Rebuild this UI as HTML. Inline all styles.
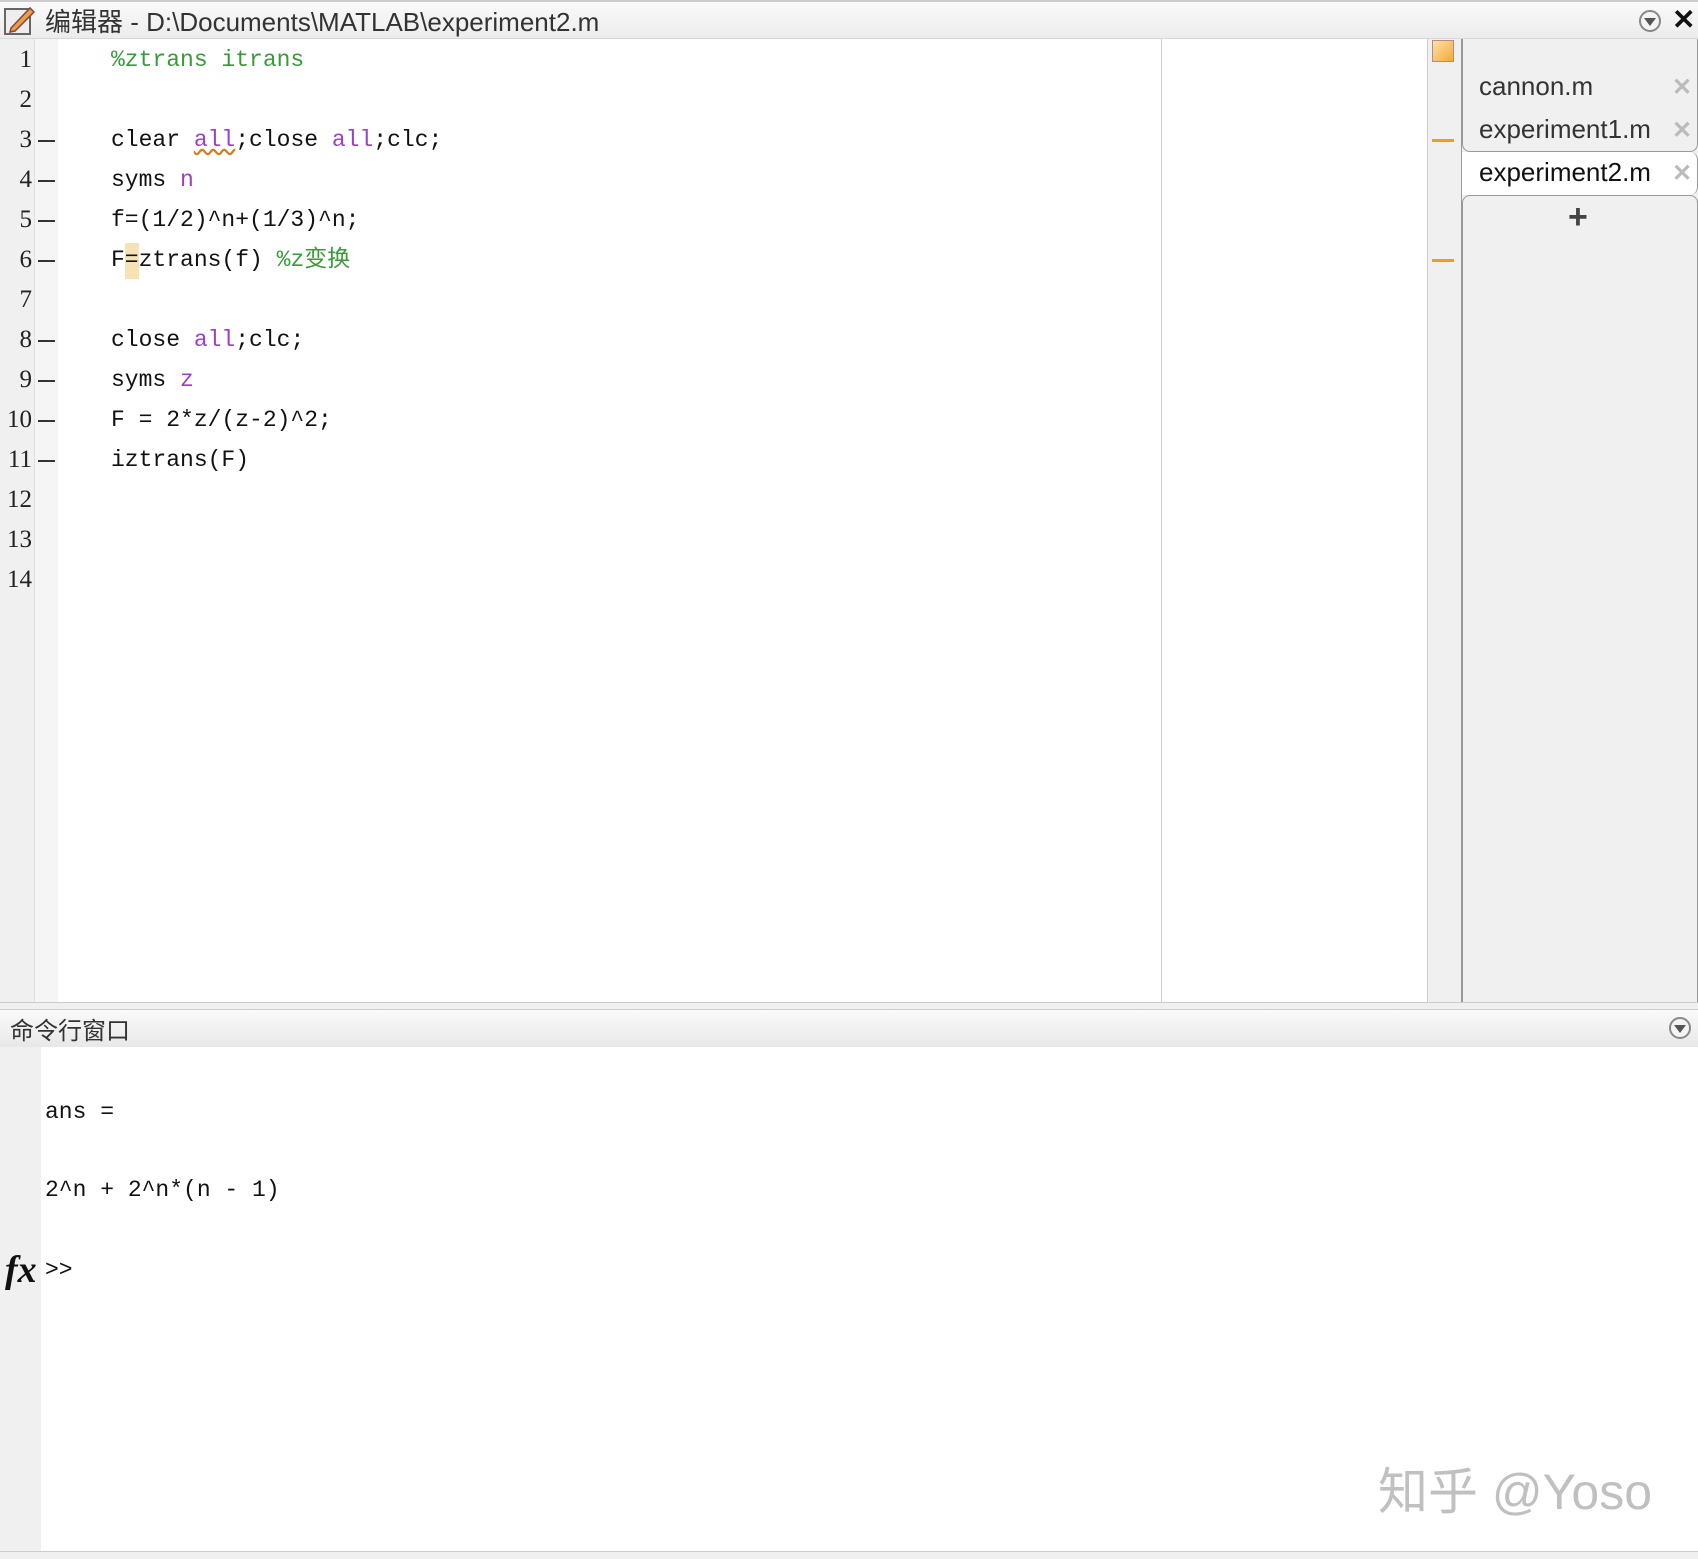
<!DOCTYPE html>
<html><head><meta charset="utf-8">
<style>
*{margin:0;padding:0;box-sizing:border-box}
body{width:1698px;height:1559px;background:#fff;position:relative;overflow:hidden;font-family:"Liberation Sans","Noto Sans CJK SC",sans-serif}
.abs{position:absolute}
.mono{font-family:"Liberation Mono","Noto Sans CJK SC",monospace;font-size:23px;color:#111;white-space:pre}
.ln{position:absolute;left:0;width:32px;text-align:right;font-family:"Liberation Serif",serif;font-size:25px;color:#222;line-height:40px}
.dash{position:absolute;left:38px;width:17px;height:2px;background:#333}
.code{position:absolute;left:111px;line-height:40px}
.c{color:#3a9a3a}.k{color:#9b3fc4}
.tab{position:absolute;left:1479px;font-size:26px;color:#333}
.x{position:absolute;left:1672px;font-size:24px;color:#bbb;font-weight:bold}
</style></head><body>
<div class="abs" style="left:0;top:0;width:1698px;height:39px;background:linear-gradient(#fafafa,#ececec);border-top:2px solid #ccc;border-bottom:1px solid #d8d8d8"></div>
<svg class="abs" style="left:4px;top:4px" width="32" height="32" viewBox="0 0 32 32"><rect x="1" y="5" width="25" height="25" fill="#eee" stroke="#666" stroke-width="2"/><path d="M7 24 L26 4 L30 8 L11 27 L6 28 Z" fill="#e8a040" stroke="#844" stroke-width="1.5"/></svg>
<div class="abs" style="left:45px;top:2px;font-size:26px;color:#333">编辑器 - D:\Documents\MATLAB\experiment2.m</div>
<svg class="abs" style="left:1638px;top:9px" width="24" height="24"><circle cx="12" cy="12" r="10" fill="#f4f4f4" stroke="#888" stroke-width="2"/><path d="M6 9 L18 9 L12 17 Z" fill="#555"/></svg>
<div class="abs" style="left:1672px;top:3px;font-size:28px;font-weight:bold;color:#111">✕</div>

<div class="abs" style="left:0;top:39px;width:35px;height:964px;background:#f0f0f0;border-right:1px solid #e0e0e0"></div>
<div class="abs" style="left:35px;top:39px;width:23px;height:964px;background:#f5f5f5"></div>
<div class="abs" style="left:1161px;top:39px;width:1px;height:964px;background:#d0d0d0"></div>
<div class="abs" style="left:1427px;top:39px;width:35px;height:964px;background:#f0f0f0;border-left:1px solid #ccc;border-right:1px solid #999"></div>
<div class="abs" style="left:1432px;top:40px;width:22px;height:22px;background:linear-gradient(135deg,#fde2a6,#f4a836);border:1px solid #b88"></div>
<div class="abs" style="left:1432px;top:139px;width:22px;height:3px;background:#f49a1c"></div>
<div class="abs" style="left:1432px;top:259px;width:22px;height:3px;background:#f49a1c"></div>

<div style="position:absolute;top:40px;left:0">
<div class="ln" style="top:0">1</div>
<div class="ln" style="top:40px">2</div>
<div class="ln" style="top:80px">3</div><div class="dash" style="top:100px"></div>
<div class="ln" style="top:120px">4</div><div class="dash" style="top:140px"></div>
<div class="ln" style="top:160px">5</div><div class="dash" style="top:180px"></div>
<div class="ln" style="top:200px">6</div><div class="dash" style="top:220px"></div>
<div class="ln" style="top:240px">7</div>
<div class="ln" style="top:280px">8</div><div class="dash" style="top:300px"></div>
<div class="ln" style="top:320px">9</div><div class="dash" style="top:340px"></div>
<div class="ln" style="top:360px">10</div><div class="dash" style="top:380px"></div>
<div class="ln" style="top:400px">11</div><div class="dash" style="top:420px"></div>
<div class="ln" style="top:440px">12</div>
<div class="ln" style="top:480px">13</div>
<div class="ln" style="top:520px">14</div>

<div class="abs" style="left:125px;top:203px;width:14px;height:36px;background:#f5e3b5"></div>
<div class="code mono" style="top:0"><span class="c">%ztrans itrans</span></div>
<div class="code mono" style="top:80px">clear <span class="k" style="text-decoration:underline wavy #d08020">all</span>;close <span class="k">all</span>;clc;</div>
<div class="code mono" style="top:120px">syms <span class="k">n</span></div>
<div class="code mono" style="top:160px">f=(1/2)^n+(1/3)^n;</div>
<div class="code mono" style="top:200px">F=ztrans(f) <span class="c">%z变换</span></div>
<div class="code mono" style="top:280px">close <span class="k">all</span>;clc;</div>
<div class="code mono" style="top:320px">syms <span class="k">z</span></div>
<div class="code mono" style="top:360px">F = 2*z/(z-2)^2;</div>
<div class="code mono" style="top:400px">iztrans(F)</div>
</div>

<div class="abs" style="left:1462px;top:39px;width:236px;height:964px;background:#f0f0f0"></div>
<div class="abs" style="left:1462px;top:39px;width:236px;height:113px;border:1px solid #999;border-top:none;border-radius:0 0 8px 8px;background:#f0f0f0"></div>
<div class="abs" style="left:1462px;top:152px;width:236px;height:43px;background:#fff;border-radius:0 8px 8px 0;border-right:1px solid #999"></div>
<div class="abs" style="left:1462px;top:195px;width:236px;height:808px;border:1px solid #999;border-bottom:none;border-radius:8px 8px 0 0"></div>
<div class="tab" style="top:71px">cannon.m</div><div class="x" style="top:73px">✕</div>
<div class="tab" style="top:114px">experiment1.m</div><div class="x" style="top:116px">✕</div>
<div class="tab" style="top:157px;color:#111">experiment2.m</div><div class="x" style="top:159px">✕</div>
<div class="abs" style="left:1568px;top:198px;font-size:34px;font-weight:bold;color:#444">+</div>

<div class="abs" style="left:0;top:1002px;width:1698px;height:8px;background:#f0f0f0;border-top:1px solid #ccc;border-bottom:1px solid #ccc"></div>
<div class="abs" style="left:0;top:1010px;width:1698px;height:37px;background:linear-gradient(#fafafa,#e8e8e8)"></div>
<div class="abs" style="left:10px;top:1011px;font-size:24px;color:#333">命令行窗口</div>
<svg class="abs" style="left:1668px;top:1016px" width="24" height="24"><circle cx="12" cy="12" r="10" fill="#f4f4f4" stroke="#888" stroke-width="2"/><path d="M6 9 L18 9 L12 17 Z" fill="#555"/></svg>
<div class="abs" style="left:0;top:1047px;width:41px;height:504px;background:#f0f0f0"></div>
<div class="abs mono" style="left:45px;top:1095px;line-height:34px">ans =</div>
<div class="abs mono" style="left:45px;top:1173px;line-height:34px">2^n + 2^n*(n - 1)</div>
<div class="abs" style="left:5px;top:1248px;font-family:'Liberation Serif',serif;font-style:italic;font-weight:bold;font-size:38px;color:#111">fx</div>
<div class="abs mono" style="left:45px;top:1253px;line-height:34px">&gt;&gt;</div>
<div class="abs" style="left:1378px;top:1452px;font-size:50px;color:#c0c0c0;font-family:'Liberation Sans','Noto Sans CJK SC',sans-serif">知乎 @Yoso</div>
<div class="abs" style="left:0;top:1551px;width:1698px;height:8px;background:#f0f0f0;border-top:1px solid #ccc"></div>
</body></html>
